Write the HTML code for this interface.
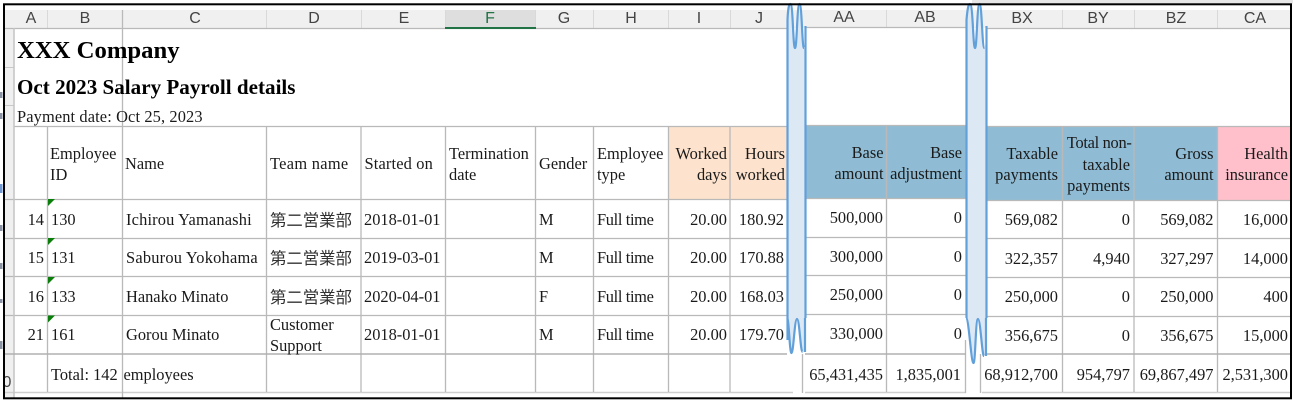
<!DOCTYPE html>
<html><head><meta charset="utf-8">
<style>
html,body{margin:0;padding:0;background:#fff}
#p{position:relative;width:1293px;height:400px;overflow:hidden;background:#fff}
svg{position:absolute;left:0;top:0}
.t{position:absolute;white-space:nowrap;font-family:"Liberation Serif","IPAGothic",serif;font-size:16.4px;line-height:20px;color:#1a1a1a}
.r{text-align:right}
.h{position:absolute;font-family:"Liberation Sans",sans-serif;font-size:16px;line-height:18px;color:#444;width:60px;text-align:center}
.j{font-family:"Noto Sans CJK JP","IPAGothic",sans-serif;color:#333;font-size:16.4px;margin-top:-1px}
.ft{letter-spacing:-.35px}
</style></head><body><div id="p">
<svg width="1293" height="400">
<rect x="972" y="0" width="321" height="3.5" fill="#e6e6e6"/>
<rect x="5" y="10" width="1286" height="18" fill="#f0f0f0"/>
<rect x="5" y="10" width="9" height="388" fill="#f0f0f0"/>
<rect x="445" y="10" width="91" height="18" fill="#dedede"/>
<rect x="668.5" y="126" width="119" height="74" fill="#fde3cd"/>
<rect x="805" y="125.5" width="161" height="73" fill="#8fbcd4"/>
<rect x="987" y="126" width="230" height="74" fill="#8fbcd4"/>
<rect x="1217" y="126" width="74" height="74" fill="#ffc0cb"/>
<g stroke="#d9d9d9" stroke-width="1">
<path d="M47.5 10V28M266.5 10V28M361.5 10V28M445.5 10V28M535.5 10V28M593.5 10V28M668.5 10V28M730.5 10V28M886.5 10V28M1062.5 10V28M1134.5 10V28M1217.5 10V28"/>
</g>
<g stroke="#c8c8c8" stroke-width="1">
<path d="M5 67.5H14M5 105.5H14"/>
</g>
<g stroke="#b9b9b9" stroke-width="1.3" fill="none">
<path d="M5 28.5H787M805 27.5H966M987 28.5H1291"/>
<path d="M14 126.5H787M987 126.5H1291M805 125.5H966"/>
<path d="M5 199.5H787M805 198.5H966M987 200.5H1291"/>
<path d="M5 238.5H787M805 237.5H966M987 238.5H1291"/>
<path d="M5 276.5H787M805 275.5H966M987 277.5H1291"/>
<path d="M5 315.5H787M805 314.5H966M987 316.5H1291"/>
<path d="M5 392.5H793M805 392.5H966M982 392.5H1291" stroke="#cfcfcf" stroke-width="1.6"/>
<path d="M14 28V398" stroke="#c4c4c4" stroke-width="1.5"/>
<path d="M47.5 126V392M122.5 10V398M266.5 126V392M361 126V392M445.5 126V392M535.5 126V392M593.5 126V392M668.5 126V392M730 126V392"/>
<path d="M886.5 125V392M1062.5 126V392M1134 126V392M1217.5 126V392M802.5 354V393M980.5 354V393M965.5 340V393"/>
</g>
<path d="M5 354H787M805 354H966M987 354H1291" stroke="#b0b0b0" stroke-width="1.5"/>
<rect x="445" y="27" width="91" height="2" fill="#217346"/>
<g fill="#0a7d0a">
<path d="M48 199H55L48 206Z"/><path d="M48 238H55L48 245Z"/><path d="M48 277H55L48 284Z"/><path d="M48 315.5H55L48 322.5Z"/>
</g>
<g fill="#8a93a3">
<rect x="0" y="92" width="2.500" height="6"/><rect x="0" y="113" width="2.500" height="6"/>
<rect x="0" y="225" width="2.500" height="6"/><rect x="0" y="263" width="2.500" height="6"/><rect x="0" y="299" width="2.500" height="4"/><rect x="0" y="341" width="2.500" height="8"/>
</g>
<rect x="0" y="184" width="2.500" height="9" fill="#6f98d2"/>
</svg>

<div class="h" style="left:1px;top:10px">A</div>
<div class="h" style="left:55px;top:10px">B</div>
<div class="h" style="left:165px;top:10px">C</div>
<div class="h" style="left:284px;top:10px">D</div>
<div class="h" style="left:374px;top:10px">E</div>
<div class="h" style="left:460px;top:10px;color:#217346">F</div>
<div class="h" style="left:534px;top:10px">G</div>
<div class="h" style="left:601px;top:10px">H</div>
<div class="h" style="left:669px;top:10px">I</div>
<div class="h" style="left:729px;top:10px">J</div>
<div class="h" style="left:814px;top:9px">AA</div>
<div class="h" style="left:895px;top:9px">AB</div>
<div class="h" style="left:992px;top:10px">BX</div>
<div class="h" style="left:1068px;top:10px">BY</div>
<div class="h" style="left:1146px;top:10px">BZ</div>
<div class="h" style="left:1225px;top:10px">CA</div>
<div class="h" style="left:-23px;top:373.500px;width:60px">0</div>

<div class="t" style="left:17px;top:36px;font-size:24.7px;line-height:30px;font-weight:bold;color:#000">XXX Company</div>
<div class="t" style="left:17px;top:75px;font-size:21.1px;line-height:24px;font-weight:bold;color:#000">Oct 2023 Salary Payroll details</div>
<div class="t" style="left:17px;top:107px;letter-spacing:.12px">Payment date: Oct 25, 2023</div>

<div class="t" style="left:50px;top:144px">Employee</div>
<div class="t" style="left:50px;top:165px">ID</div>
<div class="t" style="left:125px;top:154px">Name</div>
<div class="t" style="left:270px;top:154px;letter-spacing:.3px">Team name</div>
<div class="t" style="left:364.500px;top:154px;letter-spacing:.15px">Started on</div>
<div class="t" style="left:449px;top:144px">Termination</div>
<div class="t" style="left:449px;top:165px">date</div>
<div class="t" style="left:539px;top:154px">Gender</div>
<div class="t" style="left:597px;top:144px">Employee</div>
<div class="t" style="left:597px;top:165px">type</div>
<div class="t r" style="right:566px;top:144px">Worked</div>
<div class="t r" style="right:566px;top:165px">days</div>
<div class="t r" style="right:508px;top:144px">Hours</div>
<div class="t r" style="right:508px;top:165px">worked</div>
<div class="t r" style="right:409.500px;top:143px">Base</div>
<div class="t r" style="right:409.500px;top:164px">amount</div>
<div class="t r" style="right:331px;top:143px">Base</div>
<div class="t r" style="right:331px;top:164px">adjustment</div>
<div class="t r" style="right:235px;top:144px">Taxable</div>
<div class="t r" style="right:235px;top:165px">payments</div>
<div class="t r" style="right:161.500px;top:133px;letter-spacing:-.3px">Total non-</div>
<div class="t r" style="right:163px;top:154.500px">taxable</div>
<div class="t r" style="right:163px;top:175.500px">payments</div>
<div class="t r" style="right:79.500px;top:144px">Gross</div>
<div class="t r" style="right:79.500px;top:165px">amount</div>
<div class="t r" style="right:5px;top:144px">Health</div>
<div class="t r" style="right:5px;top:165px">insurance</div>

<div class="t r" style="right:1249px;top:210px">14</div>
<div class="t" style="left:51px;top:210px">130</div>
<div class="t" style="left:126px;top:210px;letter-spacing:.17px">Ichirou Yamanashi</div>
<div class="t j" style="left:270px;top:210px">第二営業部</div>
<div class="t" style="left:364px;top:210px">2018-01-01</div>
<div class="t" style="left:539px;top:210px">M</div>
<div class="t ft" style="left:597px;top:210px">Full time</div>
<div class="t r" style="right:566px;top:210px">20.00</div>
<div class="t r" style="right:509px;top:210px">180.92</div>
<div class="t r" style="right:410px;top:208px">500,000</div>
<div class="t r" style="right:331px;top:208px">0</div>
<div class="t r" style="right:235px;top:210px">569,082</div>
<div class="t r" style="right:163px;top:210px">0</div>
<div class="t r" style="right:79.500px;top:210px">569,082</div>
<div class="t r" style="right:5px;top:210px">16,000</div>

<div class="t r" style="right:1249px;top:248px">15</div>
<div class="t" style="left:51px;top:248px">131</div>
<div class="t" style="left:126px;top:248px;letter-spacing:.22px">Saburou Yokohama</div>
<div class="t j" style="left:270px;top:248px">第二営業部</div>
<div class="t" style="left:364px;top:248px">2019-03-01</div>
<div class="t" style="left:539px;top:248px">M</div>
<div class="t ft" style="left:597px;top:248px">Full time</div>
<div class="t r" style="right:566px;top:248px">20.00</div>
<div class="t r" style="right:509px;top:248px">170.88</div>
<div class="t r" style="right:410px;top:247px">300,000</div>
<div class="t r" style="right:331px;top:247px">0</div>
<div class="t r" style="right:235px;top:248.500px">322,357</div>
<div class="t r" style="right:163px;top:248.500px">4,940</div>
<div class="t r" style="right:79.500px;top:248.500px">327,297</div>
<div class="t r" style="right:5px;top:248.500px">14,000</div>

<div class="t r" style="right:1249px;top:287px">16</div>
<div class="t" style="left:51px;top:287px">133</div>
<div class="t" style="left:126px;top:287px">Hanako Minato</div>
<div class="t j" style="left:270px;top:287px">第二営業部</div>
<div class="t" style="left:364px;top:287px">2020-04-01</div>
<div class="t" style="left:539px;top:287px">F</div>
<div class="t ft" style="left:597px;top:287px">Full time</div>
<div class="t r" style="right:566px;top:287px">20.00</div>
<div class="t r" style="right:509px;top:287px">168.03</div>
<div class="t r" style="right:410px;top:285px">250,000</div>
<div class="t r" style="right:331px;top:285px">0</div>
<div class="t r" style="right:235px;top:287px">250,000</div>
<div class="t r" style="right:163px;top:287px">0</div>
<div class="t r" style="right:79.500px;top:287px">250,000</div>
<div class="t r" style="right:5px;top:287px">400</div>

<div class="t r" style="right:1249px;top:325px">21</div>
<div class="t" style="left:51px;top:325px">161</div>
<div class="t" style="left:126px;top:325px">Gorou Minato</div>
<div class="t" style="left:270px;top:315px">Customer</div>
<div class="t" style="left:270px;top:336px">Support</div>
<div class="t" style="left:364px;top:325px">2018-01-01</div>
<div class="t" style="left:539px;top:325px">M</div>
<div class="t ft" style="left:597px;top:325px">Full time</div>
<div class="t r" style="right:566px;top:325px">20.00</div>
<div class="t r" style="right:509px;top:325px">179.70</div>
<div class="t r" style="right:410px;top:324px">330,000</div>
<div class="t r" style="right:331px;top:324px">0</div>
<div class="t r" style="right:235px;top:325.500px">356,675</div>
<div class="t r" style="right:163px;top:325.500px">0</div>
<div class="t r" style="right:79.500px;top:325.500px">356,675</div>
<div class="t r" style="right:5px;top:325.500px">15,000</div>

<div class="t" style="left:51px;top:364.500px">Total: 142</div>
<div class="t" style="left:123.500px;top:364.500px">employees</div>
<div class="t r" style="right:410px;top:364.500px">65,431,435</div>
<div class="t r" style="right:332px;top:364.500px">1,835,001</div>
<div class="t r" style="right:235px;top:364.500px">68,912,700</div>
<div class="t r" style="right:163px;top:364.500px">954,797</div>
<div class="t r" style="right:79.500px;top:364.500px">69,867,497</div>
<div class="t r" style="right:5px;top:364.500px">2,531,300</div>

<svg width="1293" height="400">
<g fill="#dde8f5" stroke="none">
<path d="M787.500 20C788 8 789 4 790.500 4C793 4 793 48 795 48C797 48 797 4 799.500 4C802 4 802 48 804 48L805.500 40V352H803C801 352 799.500 319 797 319C794.500 319 793.500 353 791.500 353C789.500 353 789 318 787.500 318Z"/>
<path d="M967 20C967.500 8 968.500 4 970 4C973 4 973 48 975 48C977 48 977 4 979.500 4C982 4 982 48 984.500 48L986.500 40V356H984C982 356 980.500 319 978 319C975.500 319 975.500 363 973.500 363C971 363 970 318 966 318Z"/>
</g>
<g fill="none" stroke="#62a0da" stroke-width="2.200">
<path d="M787.500 340V20C788 8 789 4 790.500 4C793 4 793 48 795 48C797 48 797 4 799.500 4C802 4 802 48 804 48"/>
<path d="M805.500 26V318"/>
<path d="M787 318C789 318 789.500 353 791.500 353C793.500 353 794.500 319 797 319C799.500 319 800.500 352 802.500 352"/>
<path d="M805 318V352"/>
<path d="M966.500 318V20C967.500 8 968.500 4 970 4C973 4 973 48 975 48C977 48 977 4 979.500 4C982 4 982 48 984.500 48"/>
<path d="M986.500 26V318"/>
<path d="M966 318C969 318 971 363 973.500 363C975.500 363 975.500 319 978 319C980.500 319 982 356 984 356"/>
<path d="M986 318V356"/>
</g>
<rect x="4" y="4.300" width="1287" height="394" fill="none" stroke="#000" stroke-width="2"/>
</svg>
</div></body></html>
